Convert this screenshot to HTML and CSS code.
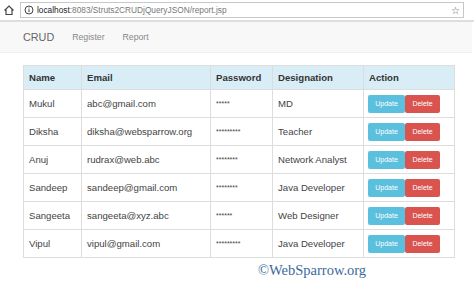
FILE: index.html
```html
<!DOCTYPE html>
<html lang="en">
<head>
    <meta charset="UTF-8">
    <title>Report</title>
    <link rel="stylesheet" href="styles.css">
</head>
<body>
    <div class="browser-bar">
        <svg class="home-icon" width="12" height="12" viewBox="0 0 12 12">
            <path d="M1.5 6.5 L6 2 L10.5 6.5 M3 5.5 V10.5 H9 V5.5" fill="none" stroke="#444" stroke-width="1.2"/>
        </svg>
        <div class="address">
            <svg class="info-icon" width="10" height="10" viewBox="0 0 10 10">
                <circle cx="5" cy="5" r="4" fill="none" stroke="#444" stroke-width="1"/>
                <rect x="4.5" y="4.2" width="1" height="3" fill="#444"/>
                <rect x="4.5" y="2.5" width="1" height="1" fill="#444"/>
            </svg>
            <span class="host">localhost</span><span class="path">:8083/Struts2CRUDjQueryJSON/report.jsp</span>
            <span class="star">&#9734;</span>
        </div>
    </div>

    <nav class="navbar">
        <span class="brand">CRUD</span>
        <a class="nav-link">Register</a>
        <a class="nav-link">Report</a>
    </nav>

    <table class="report">
        <thead>
            <tr>
                <th class="c-name">Name</th>
                <th class="c-email">Email</th>
                <th class="c-pass">Password</th>
                <th class="c-desig">Designation</th>
                <th class="c-action">Action</th>
            </tr>
        </thead>
        <tbody>
            <tr>
                <td>Mukul</td>
                <td>abc@gmail.com</td>
                <td class="stars">*****</td>
                <td>MD</td>
                <td><button class="btn update">Update</button><button class="btn delete">Delete</button></td>
            </tr>
            <tr>
                <td>Diksha</td>
                <td>diksha@websparrow.org</td>
                <td class="stars">*********</td>
                <td>Teacher</td>
                <td><button class="btn update">Update</button><button class="btn delete">Delete</button></td>
            </tr>
            <tr>
                <td>Anuj</td>
                <td>rudrax@web.abc</td>
                <td class="stars">********</td>
                <td>Network Analyst</td>
                <td><button class="btn update">Update</button><button class="btn delete">Delete</button></td>
            </tr>
            <tr>
                <td>Sandeep</td>
                <td>sandeep@gmail.com</td>
                <td class="stars">********</td>
                <td>Java Developer</td>
                <td><button class="btn update">Update</button><button class="btn delete">Delete</button></td>
            </tr>
            <tr>
                <td>Sangeeta</td>
                <td>sangeeta@xyz.abc</td>
                <td class="stars">******</td>
                <td>Web Designer</td>
                <td><button class="btn update">Update</button><button class="btn delete">Delete</button></td>
            </tr>
            <tr>
                <td>Vipul</td>
                <td>vipul@gmail.com</td>
                <td class="stars">*********</td>
                <td>Java Developer</td>
                <td><button class="btn update">Update</button><button class="btn delete">Delete</button></td>
            </tr>
        </tbody>
    </table>

    <div class="watermark">©WebSparrow.org</div>
</body>
</html>
```

FILE: styles.css
```css
body {
    margin: 0;
    font-family: "Liberation Sans", Arial, sans-serif;
    background-color: #ffffff;
    color: #333;
}
.browser-bar {
    height: 20px;
    display: flex;
    align-items: center;
    border-bottom: 2px solid #dedede;
}
.home-icon {
    margin-left: 3px;
    margin-right: 5px;
}
.address {
    display: flex;
    align-items: center;
    width: 444px;
    height: 14px;
    border: 1px solid #c8c8c8;
    font-size: 8.3px;
    padding-left: 3px;
    box-sizing: border-box;
    height: 16px;
}
.info-icon {
    margin-right: 3px;
}
.host {
    color: #222;
}
.path {
    color: #777;
}
.star {
    margin-left: auto;
    margin-right: 3px;
    font-size: 10px;
    color: #555;
}
.navbar {
    height: 30px;
    margin-right: 2px;
    display: flex;
    align-items: center;
    background-color: #f8f8f8;
    border-bottom: 1px solid #efefef;
}
.brand {
    margin-left: 23px;
    font-size: 10.8px;
    color: #666;
    margin-right: 18px;
}
.nav-link {
    font-size: 8.7px;
    color: #888;
    margin-right: 18px;
}
.report {
    margin: 12px 0 0 23px;
    width: 432px;
    border-collapse: collapse;
    font-size: 9.6px;
    table-layout: fixed;
}
.report th, .report td {
    border: 1px solid #ddd;
    text-align: left;
    padding: 0 5px;
}
.report th {
    background-color: #d9edf7;
    font-weight: bold;
    height: 23px;
    color: #333;
}
.report td {
    height: 27px;
    color: #444;
}
.report td.stars {
    font-size: 7px;
    vertical-align: middle;
}
.c-name { width: 47px; }
.c-email { width: 118px; }
.c-pass { width: 51px; }
.c-desig { width: 80px; }
.report td:last-child {
    padding-left: 4px;
}
.btn {
    height: 18px;
    border: none;
    border-radius: 2px;
    color: #fff;
    font-family: "Liberation Sans", Arial, sans-serif;
    font-size: 7px;
    padding: 0;
    vertical-align: middle;
}
.update {
    width: 37px;
    background-color: #5bc0de;
}
.delete {
    width: 35px;
    background-color: #d9534f;
}
.watermark {
    margin: 4px 0 0 258px;
    font-family: "Liberation Serif", "Times New Roman", serif;
    font-size: 14.5px;
    color: #3b6b9b;
}
```
